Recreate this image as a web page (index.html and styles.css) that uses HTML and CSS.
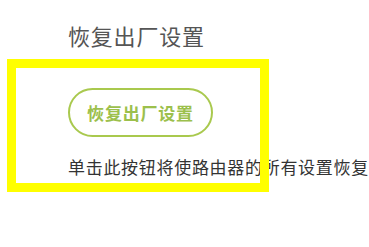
FILE: index.html
```html
<!DOCTYPE html>
<html lang="zh-CN">
<head>
<meta charset="utf-8">
<link rel="stylesheet" href="styles.css">
</head>
<body>
<div class="page">
  <section class="panel">
    <h1 class="title">恢复出厂设置</h1>
    <button class="reset-btn" type="button">恢复出厂设置</button>
    <p class="desc">单击此按钮将使路由器的所有设置恢复出厂时的默认状态</p>
  </section>
  <div class="highlight"></div>
</div>
</body>
</html>
```
FILE: styles.css
```css
html, body {
  margin: 0;
  padding: 0;
  background: #ffffff;
}
body {
  font-family: "Noto Sans CJK SC", "Noto Sans", sans-serif;
}
.page {
  position: relative;
  width: 369px;
  height: 247px;
  overflow: hidden;
}
.panel {
  padding: 21px 0 0 68px;
  display: flex;
  flex-direction: column;
  align-items: flex-start;
}
.title {
  margin: 0;
  font-size: 22px;
  font-weight: normal;
  line-height: 28px;
  color: #555555;
  letter-spacing: 0.8px;
}
.reset-btn {
  margin-top: 39px;
  width: 145px;
  height: 49px;
  border: 2px solid #a9c94e;
  border-radius: 25px;
  background: #ffffff;
  color: #9cc04c;
  font-family: inherit;
  font-size: 17px;
  font-weight: bold;
  letter-spacing: 0.8px;
  padding: 0;
}
.desc {
  margin: 18px 0 0;
  font-size: 17px;
  line-height: 24px;
  color: #333333;
  white-space: nowrap;
  letter-spacing: 0.7px;
}
.highlight {
  position: absolute;
  left: 7px;
  top: 59px;
  width: 244px;
  height: 115px;
  border: 9px solid #ffff00;
}
```
